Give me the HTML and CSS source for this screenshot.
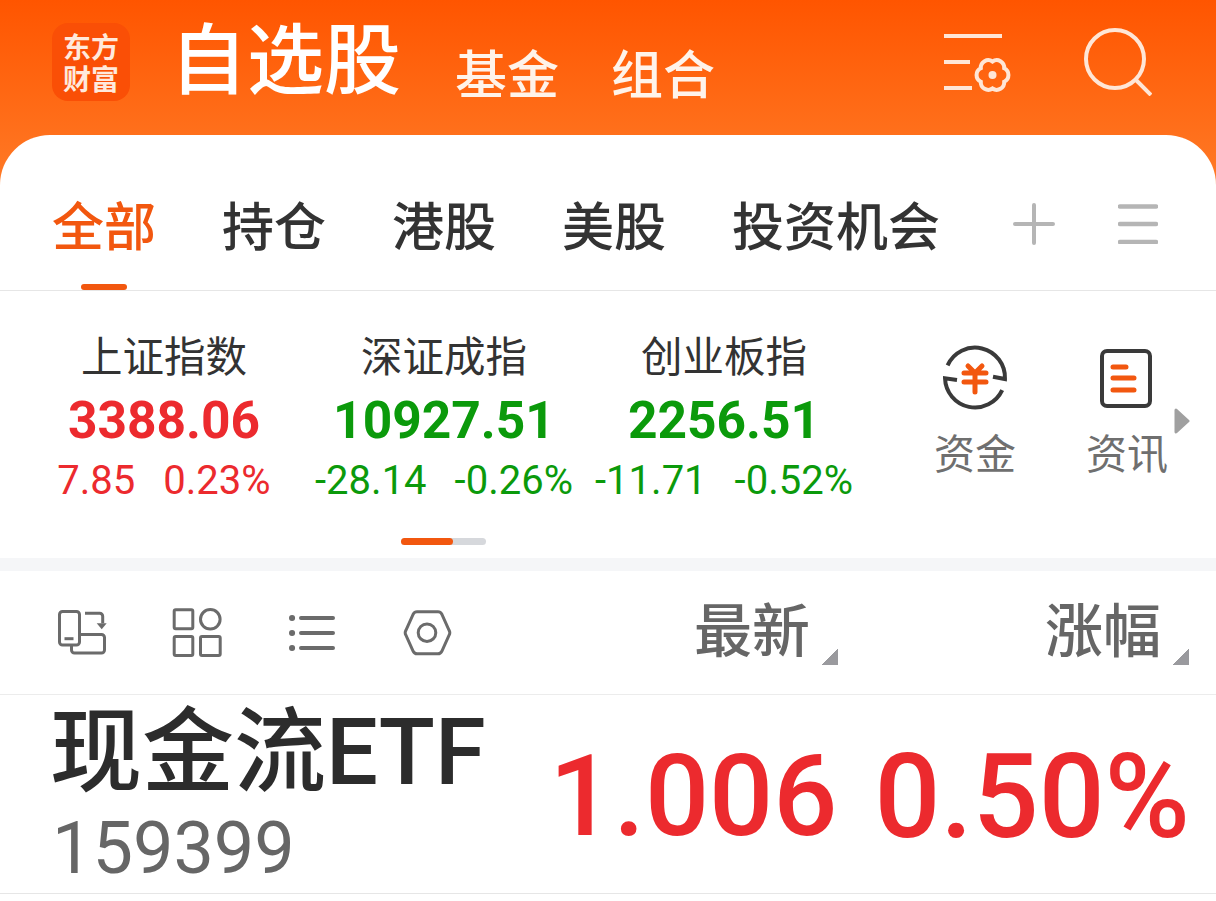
FILE: index.html
```html
<!DOCTYPE html>
<html lang="zh-CN">
<head>
  <meta charset="UTF-8" />
  <title>自选股</title>
  <link rel="stylesheet" href="styles.css">
</head>
<body>
  <header class="topbar">
    <div class="logo"><span>东方</span><span>财富</span></div>
    <h1>自选股</h1>
    <a class="top-link link-first">基金</a>
    <a class="top-link">组合</a>
    <svg class="icon-manage" viewBox="0 0 68 60" fill="none" stroke="#ffe6d6" stroke-width="4">
      <path d="M0 2h58M0 28h26M0 54h28"/>
      <path d="M60.200 47.750A7.500 7.500 0 0 1 48.500 54.500A7.500 7.500 0 0 1 36.800 47.750A7.500 7.500 0 0 1 36.800 34.250A7.500 7.500 0 0 1 48.500 27.500A7.500 7.500 0 0 1 60.200 34.250A7.500 7.500 0 0 1 60.200 47.750z"/>
      <circle cx="48.500" cy="41" r="4" fill="#ffe6d6" stroke="none"/>
    </svg>
    <svg class="icon-search" viewBox="0 0 68 68" fill="none" stroke="#ffe6d6" stroke-width="4">
      <circle cx="31" cy="31" r="29"/>
      <path d="M52 52l15 15"/>
    </svg>
  </header>

  <main class="sheet">
    <nav class="tabs">
      <a class="tab active">全部</a>
      <a class="tab">持仓</a>
      <a class="tab">港股</a>
      <a class="tab">美股</a>
      <a class="tab">投资机会</a>
      <svg class="icon-plus" viewBox="0 0 42 42" stroke="#b5b5b5" stroke-width="4" stroke-linecap="round">
        <path d="M21 2v38M2 21h38"/>
      </svg>
      <svg class="icon-menu" viewBox="0 0 40 40" stroke="#b5b5b5" stroke-width="4.500" stroke-linecap="round">
        <path d="M2 2.500h36M2 20h36M2 38h36"/>
      </svg>
    </nav>

    <section class="market">
      <div class="indexes">
        <div class="index">
          <div class="index-name">上证指数</div>
          <div class="index-value up">3388.06</div>
          <div class="index-change up"><span>7.85</span><span>0.23%</span></div>
        </div>
        <div class="index">
          <div class="index-name">深证成指</div>
          <div class="index-value down">10927.51</div>
          <div class="index-change down"><span>-28.14</span><span>-0.26%</span></div>
        </div>
        <div class="index">
          <div class="index-name">创业板指</div>
          <div class="index-value down">2256.51</div>
          <div class="index-change down"><span>-11.71</span><span>-0.52%</span></div>
        </div>
      </div>
      <div class="shortcut">
        <svg viewBox="0 0 64 64" width="64" height="64" fill="none">
          <path d="M4.600 21.400A30 30 0 0 1 61.960 35L50 32.700M14 36L2.030 34.300A30 30 0 0 0 59.200 46.200" stroke="#3a3a3a" stroke-width="4"/>
          <path d="M25 22l7 7 7-7M21 29h22M21 38h22M32 29v19" stroke="#f2570f" stroke-width="5" stroke-linecap="round"/>
        </svg>
        <span>资金</span>
      </div>
      <div class="shortcut">
        <svg viewBox="0 0 64 64" width="64" height="64" fill="none">
          <rect x="7" y="7" width="48" height="55" rx="5" stroke="#3a3a3a" stroke-width="4"/>
          <path d="M18 23h13M18 34h21M18 46h21" stroke="#f2570f" stroke-width="5" stroke-linecap="round"/>
        </svg>
        <span>资讯</span>
      </div>
      <svg class="more-arrow" viewBox="0 0 16 26" fill="#a0a0a0">
        <path d="M2 2l12 11-12 11z" stroke="#a0a0a0" stroke-width="3" stroke-linejoin="round"/>
      </svg>
      <div class="pager"><div class="pager-fill"></div></div>
    </section>

    <div class="band"></div>

    <section class="toolbar">
      <svg class="tool" viewBox="0 0 50 50" fill="none" stroke="#6b6b6b" stroke-width="3">
        <rect x="2.500" y="3.500" width="20" height="33.500" rx="3"/>
        <path d="M7.500 30.700h9"/>
        <path d="M28 5.300h14.700a3 3 0 0 1 3 3v7"/>
        <path d="M39.700 15.300h10l-5 6z" fill="#6b6b6b" stroke="none"/>
        <path d="M23 26.500h21.500a3 3 0 0 1 3 3V42a3 3 0 0 1-3 3H17.500a3 3 0 0 1-3-3v-4.500"/>
      </svg>
      <svg class="tool" viewBox="0 0 50 50" fill="none" stroke="#6b6b6b" stroke-width="3">
        <rect x="2.200" y="1.800" width="18.600" height="19" rx="1.500"/>
        <circle cx="38.300" cy="11.300" r="9.800"/>
        <rect x="2.200" y="28.500" width="18.600" height="19" rx="1.500"/>
        <rect x="28.500" y="28.500" width="19.700" height="19" rx="1.500"/>
      </svg>
      <svg class="tool" viewBox="0 0 50 50" fill="none" stroke="#6b6b6b" stroke-width="4" stroke-linecap="round">
        <path d="M14 10h32M14 25h32M14 40h32"/>
        <path d="M5 10h.1M5 25h.1M5 40h.1" stroke-width="6"/>
      </svg>
      <svg class="tool" viewBox="0 0 50 50" fill="none" stroke="#6b6b6b" stroke-width="3">
        <path d="M15 3.800H36Q38.500 3.800 39.700 6L47.200 22.500Q48.400 24.800 47.200 27L39.700 43.500Q38.500 45.800 36 45.800H15Q12.500 45.800 11.300 43.500L3.800 27Q2.600 24.800 3.800 22.500L11.300 6Q12.500 3.800 15 3.800z"/>
        <circle cx="25" cy="24.700" r="8.800"/>
      </svg>
      <div class="col-title col-latest">最新<i class="sort-mark"></i></div>
      <div class="col-title col-change">涨幅<i class="sort-mark"></i></div>
    </section>

    <section class="stock">
      <div class="stock-info">
        <div class="stock-name">现金流ETF</div>
        <div class="stock-code">159399</div>
      </div>
      <div class="stock-price up">1.006</div>
      <div class="stock-pct up">0.50%</div>
    </section>
  </main>
</body>
</html>
```

FILE: styles.css
```css
:root {
  --laranja: #f2570f;
  --vermelho: #ec2a2e;
  --verde: #0b9a0b;
  --cjk: "Noto Sans CJK SC", sans-serif;
  --num: Roboto, "Noto Sans CJK SC", sans-serif;
}
* { box-sizing: border-box; margin: 0; padding: 0; }
body {
  font-family: var(--cjk);
  background: #fff;
  color: #2c2c2c;
  height: 901px;
  overflow: hidden;
}
.up { color: var(--vermelho); }
.down { color: var(--verde); }

/* topo laranja */
.topbar {
  height: 185px;
  padding: 0 64px 50px 52px;
  background: linear-gradient(180deg, #ff5500 0%, #ff7a26 100%);
  display: flex;
  align-items: center;
  color: #fff;
}
.logo {
  width: 78px;
  height: 78px;
  border-radius: 16px;
  background: #fa4f06;
  color: #ffe9dc;
  font-size: 28px;
  font-weight: 700;
  line-height: 32px;
  display: flex;
  flex-direction: column;
  align-items: center;
  justify-content: center;
  margin-top: -11px;
}
.topbar h1 {
  font-size: 77px;
  font-weight: 500;
  line-height: 1;
  margin-left: 40px;
  margin-top: -26px;
}
.top-link {
  font-size: 52px;
  font-weight: 500;
  line-height: 1;
  margin-left: 52px;
  margin-top: 8px;
  color: #fff3ea;
}
.link-first { margin-left: 54px; }
.icon-manage {
  width: 68px;
  height: 60px;
  margin-left: auto;
  margin-top: -7px;
}
.icon-search {
  width: 68px;
  height: 68px;
  margin-left: 72px;
  margin-top: -12px;
}

/* folha branca */
.sheet {
  margin-top: -50px;
  background: #fff;
  border-radius: 50px 50px 0 0;
  position: relative;
}
.tabs {
  height: 156px;
  padding: 22px 58px 0 52px;
  border-bottom: 1px solid #e6e6e6;
  display: flex;
  align-items: center;
}
.tab {
  font-size: 52px;
  line-height: 1;
  font-weight: 500;
  margin-right: 66px;
  position: relative;
  color: #333;
}
.tab.active { color: var(--laranja); }
.tab.active::after {
  content: "";
  position: absolute;
  left: 29px;
  bottom: -40px;
  width: 46px;
  height: 6px;
  border-radius: 3px;
  background: var(--laranja);
}
.icon-plus { width: 42px; height: 42px; margin-left: 7px; }
.icon-menu { width: 40px; height: 40px; margin-left: auto; }

/* indices */
.market {
  height: 267px;
  position: relative;
  display: flex;
  padding-top: 38px;
}
.indexes {
  display: flex;
  padding-left: 24px;
}
.index {
  width: 280px;
  text-align: center;
}
.index-name {
  font-size: 41.500px;
  line-height: 50px;
  color: #333;
}
.index-value {
  font-family: var(--num);
  font-size: 51.500px;
  font-weight: 700;
  line-height: 62px;
  margin-top: 11px;
}
.index-change {
  font-family: var(--num);
  font-size: 40px;
  line-height: 44px;
  display: flex;
  justify-content: center;
  gap: 28px;
  margin-top: 7px;
}
.shortcut {
  width: 82px;
  margin-left: 70px;
  display: flex;
  flex-direction: column;
  align-items: center;
  font-size: 41px;
  line-height: 50px;
  color: #6f6f6f;
  margin-top: 15px;
}
.shortcut svg { overflow: visible; }
.shortcut span { margin-top: 18px; }
.more-arrow {
  position: absolute;
  left: 1174px;
  top: 117px;
  width: 16px;
  height: 26px;
}
.pager {
  position: absolute;
  left: 401px;
  top: 247px;
  width: 85px;
  height: 7px;
  border-radius: 4px;
  background: #d6d8dc;
}
.pager-fill {
  width: 52px;
  height: 100%;
  border-radius: 4px;
  background: var(--laranja);
}
.band { height: 13px; background: #f5f6f8; }

/* barra de ferramentas */
.toolbar {
  height: 124px;
  padding: 0 27px 0 57px;
  border-bottom: 1px solid #ececec;
  display: flex;
  align-items: center;
  color: #666;
}
.tool { width: 50px; height: 50px; margin-right: 65px; flex: none; }
.tool:nth-child(4) { margin-right: 0; }
.col-title {
  font-size: 58px;
  line-height: 1;
  font-weight: 500;
  display: flex;
  margin-top: -2px;
}
.col-latest { margin-left: 242px; }
.col-change { margin-left: auto; }
.sort-mark {
  width: 16px;
  height: 16px;
  margin: 51px 0 0 12px;
  background: linear-gradient(135deg, transparent 50%, #9a9a9e 50%);
}

/* linha da acao */
.stock {
  height: 199px;
  padding: 0 26px 0 52px;
  border-bottom: 1px solid #e6e6e6;
  display: flex;
  position: relative;
}
.stock-name {
  font-size: 92px;
  line-height: 108px;
  font-weight: 500;
  white-space: nowrap;
  font-family: var(--num);
  margin: 4px 0 0 -2px;
}
.stock-code {
  font-family: var(--num);
  font-size: 72px;
  line-height: 80px;
  color: #666;
  margin-top: 2px;
}
.stock-price,
.stock-pct {
  font-family: var(--num);
  font-weight: 500;
  line-height: 1;
  margin-top: 45px;
}
.stock-price { font-size: 113px; margin-left: auto; }
.stock-pct { font-size: 116px; margin-left: 37px; margin-top: 44px; }
```
